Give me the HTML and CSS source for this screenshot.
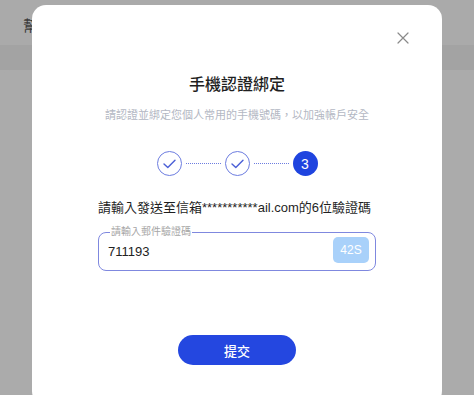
FILE: index.html
```html
<!DOCTYPE html>
<html>
<head>
    <meta charset="UTF-8">
    <title>手機認證綁定</title>
    <link rel="stylesheet" href="styles.css">
</head>
<body>
    <div class="page">
        <div class="topbar"><span class="topbar-title">幫助中心</span></div>
        <div class="band"></div>
        <div class="panel"></div>
    </div>

    <div class="modal">
        <button class="modal-close" type="button" aria-label="關閉">
            <svg width="12" height="12" viewBox="0 0 12 12">
                <path d="M1 1 L11 11 M11 1 L1 11" stroke="#8a8a8a" stroke-width="1.2" fill="none" stroke-linecap="round"/>
            </svg>
        </button>

        <h1 class="modal-title">手機認證綁定</h1>
        <p class="modal-subtitle">請認證並綁定您個人常用的手機號碼，以加強帳戶安全</p>

        <div class="steps">
            <div class="step done">
                <svg width="13" height="10" viewBox="0 0 13 10">
                    <path d="M1 5 L4.8 8.6 L12 1.2" stroke="#4b5fd6" stroke-width="1.4" fill="none" stroke-linecap="round" stroke-linejoin="round"/>
                </svg>
            </div>
            <div class="step-line"></div>
            <div class="step done">
                <svg width="13" height="10" viewBox="0 0 13 10">
                    <path d="M1 5 L4.8 8.6 L12 1.2" stroke="#4b5fd6" stroke-width="1.4" fill="none" stroke-linecap="round" stroke-linejoin="round"/>
                </svg>
            </div>
            <div class="step-line"></div>
            <div class="step current">3</div>
        </div>

        <p class="code-hint">請輸入發送至信箱***********ail.com的6位驗證碼</p>

        <fieldset class="code-field">
            <legend>請輸入郵件驗證碼</legend>
            <input type="text" class="code-input" value="711193">
            <button type="button" class="resend-button" disabled>42S</button>
        </fieldset>

        <button type="button" class="submit-button">提交</button>
    </div>
</body>
</html>
```

FILE: styles.css
```css
* {
    margin: 0;
    padding: 0;
    box-sizing: border-box;
    font-family: 'Liberation Sans', 'Noto Sans CJK TC', sans-serif;
}

body {
    width: 474px;
    height: 395px;
    overflow: hidden;
    background-color: #ababab;
}

/* page behind the dimmed overlay */
.page {
    display: flex;
    flex-direction: column;
    height: 100%;
}

.topbar {
    height: 45px;
    padding: 14px 0 0 23px;
    background-color: #aaaaaa;
}

.topbar-title {
    font-size: 15px;
    color: #3c3c3c;
}

.band {
    height: 25px;
    background-color: #a3a3a3;
}

.panel {
    flex: 1;
    border-radius: 10px 10px 0 0;
    background-color: #ababab;
}

/* dialog */
.modal {
    position: absolute;
    left: 32px;
    top: 5px;
    width: 410px;
    height: 400px;
    padding: 68px 66px 0;
    background-color: #ffffff;
    border-radius: 14px;
    display: flex;
    flex-direction: column;
    align-items: center;
}

.modal-close {
    position: absolute;
    top: 27px;
    right: 33px;
    width: 12px;
    height: 12px;
    border: none;
    background: none;
    display: flex;
}

.modal-title {
    font-size: 16px;
    line-height: 24px;
    font-weight: 500;
    color: #1f1f1f;
}

.modal-subtitle {
    margin-top: 8px;
    font-size: 11px;
    line-height: 20px;
    white-space: nowrap;
    color: #b3b7c3;
}

.steps {
    margin-top: 26px;
    display: flex;
    align-items: center;
    gap: 4px;
}

.step {
    width: 25px;
    height: 25px;
    border-radius: 50%;
    display: flex;
    align-items: center;
    justify-content: center;
}

.step.done {
    border: 1px solid #6d7de0;
}

.step.current {
    background-color: #1f44df;
    color: #ffffff;
    font-size: 14px;
}

.step-line {
    width: 35px;
    border-top: 1.5px dotted #6d7de0;
}

.code-hint {
    align-self: stretch;
    margin-top: 22px;
    font-size: 13px;
    line-height: 20px;
    color: #1f1f1f;
}

.code-field {
    align-self: stretch;
    margin-top: 8px;
    height: 45px;
    padding: 0 6px 0 9px;
    border: 1.5px solid #7f88df;
    border-radius: 8px;
    display: flex;
    align-items: flex-start;
    gap: 8px;
}

.code-field legend {
    margin-left: 2px;
    padding: 0 1px;
    font-size: 10px;
    line-height: 12px;
    color: #a6a6a6;
}

.code-input {
    flex: 1;
    height: 16px;
    border: none;
    outline: none;
    margin-top: 6px;
    font-size: 13px;
    line-height: 16px;
    color: #222222;
    background: none;
}

.resend-button {
    margin-top: -1px;
    width: 36px;
    height: 26px;
    border: none;
    border-radius: 5px;
    background-color: #a9d1fa;
    color: #ffffff;
    font-size: 12px;
}

.submit-button {
    margin-top: 64px;
    width: 118px;
    height: 30px;
    border: none;
    border-radius: 15px;
    background-color: #2447e0;
    color: #ffffff;
    font-size: 13px;
    font-weight: 500;
}
```
